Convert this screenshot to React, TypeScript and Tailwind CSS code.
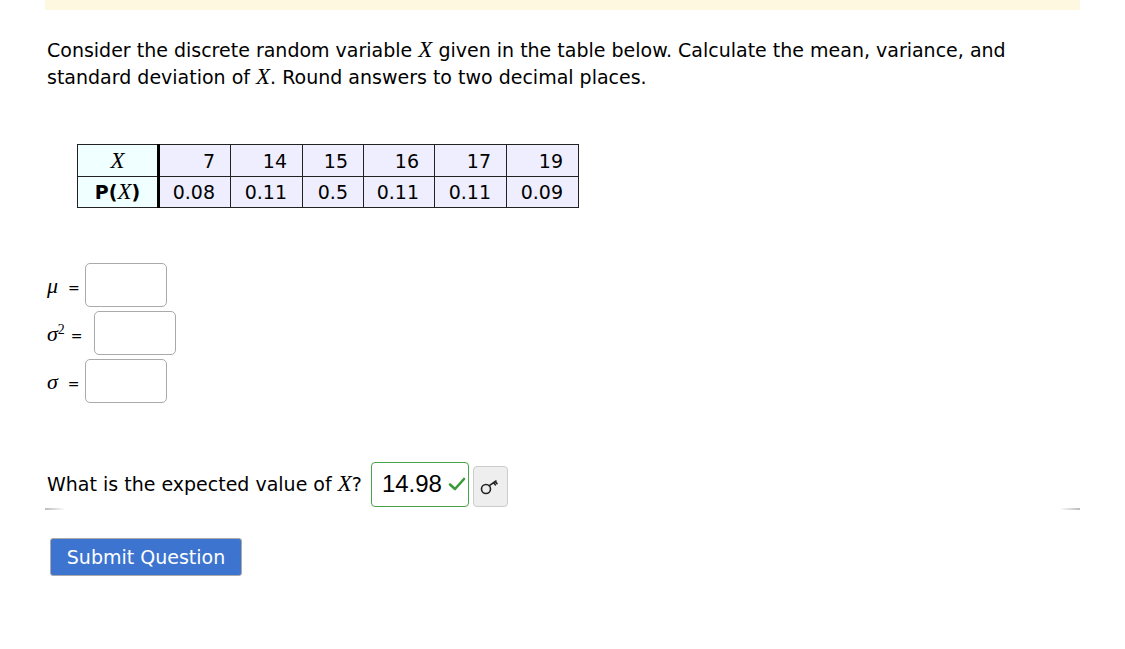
import { ReactNode } from "react";

function MathVar({ children }: { children: ReactNode }) {
  return (
    <span className="italic text-[23px] leading-[20px] [font-family:'Liberation_Serif',serif]">{children}</span>
  );
}

const xs = [7, 14, 15, 16, 17, 19];
const ps = ["0.08", "0.11", "0.5", "0.11", "0.11", "0.09"];
const widths = ["w-[72px]", "w-[72px]", "w-[61px]", "w-[71px]", "w-[72px]", "w-[72px]"];

function AnswerBox({ className = "" }: { className?: string }) {
  return <div className={`h-[44px] w-[82px] rounded-[5px] border border-[#aaa] bg-white ${className}`} />;
}

export default function App() {
  return (
    <div className="min-h-[649px] bg-white text-[19px] text-black [font-family:'DejaVu_Sans',sans-serif]">
      <div className="ml-[45px] w-[1035px]">
        <div className="h-[10px] bg-[#fff8e1]" />

        <p className="mt-[27px] w-[1000px] pl-[2px] leading-[27px]">
          Consider the discrete random variable <MathVar>X</MathVar> given in the table below. Calculate the mean,
          variance, and standard deviation of <MathVar>X</MathVar>. Round answers to two decimal places.
        </p>

        <table className="ml-[32px] mt-[53px] border-collapse border border-[#222] leading-[22px]">
          <tbody>
            <tr className="h-[32px]">
              <td className="w-[81px] border border-[#222] bg-[#f0ffff] text-center">
                <MathVar>X</MathVar>
              </td>
              {xs.map((x, i) => (
                <td
                  key={x}
                  className={`${widths[i]} border border-[#222] bg-[#eeeeff] pr-[15px] text-right ${i === 0 ? "border-l-[3px] border-l-black" : ""}`}
                >
                  {x}
                </td>
              ))}
            </tr>
            <tr className="h-[31px]">
              <td className="border border-[#222] bg-[#f0ffff] text-center font-bold">
                P(<span className="font-normal"><MathVar>X</MathVar></span>)
              </td>
              {ps.map((p, i) => (
                <td
                  key={i}
                  className={`border border-[#222] bg-[#eeeeff] pr-[15px] text-right ${i === 0 ? "border-l-[3px] border-l-black" : ""}`}
                >
                  {p}
                </td>
              ))}
            </tr>
          </tbody>
        </table>

        <div className="mt-[55px] flex flex-col gap-[4px] pl-[2px] text-[14px]">
          <div className="flex items-center">
            <span className="w-[38px]">
              <span className="mr-[10px] italic text-[22px] [font-family:'Liberation_Serif',serif]">μ</span>
              <span>=</span>
            </span>
            <AnswerBox />
          </div>
          <div className="flex items-center">
            <span className="w-[47px]">
              <span className="mr-[6px] italic text-[22px] [font-family:'Liberation_Serif',serif]">
                σ<sup className="not-italic text-[14px]">2</sup>
              </span>
              <span>=</span>
            </span>
            <AnswerBox className="w-[81px]" />
          </div>
          <div className="flex items-center">
            <span className="w-[38px]">
              <span className="mr-[10px] italic text-[22px] [font-family:'Liberation_Serif',serif]">σ</span>
              <span>=</span>
            </span>
            <AnswerBox className="w-[81px]" />
          </div>
        </div>

        <div className="mt-[58px] flex items-center pl-[2px]">
          <span>
            What is the expected value of <MathVar>X</MathVar>?
          </span>
          <div className="ml-[9px] flex h-[45px] w-[98px] items-center gap-[6px] rounded-[4px] border border-[#4aa34a] pl-[10px] text-[24px] [font-family:'Liberation_Sans',sans-serif]">
            <span>14.98</span>
            <svg width="18" height="18" viewBox="0 0 18 18" className="text-[#3a9a3a]">
              <path d="M2 9.5 L7 14 L16 4" fill="none" stroke="currentColor" strokeWidth="2.6" strokeLinecap="round" strokeLinejoin="round" />
            </svg>
          </div>
          <button className="ml-[4px] mt-[5px] flex h-[41px] w-[35px] items-center justify-center rounded-[4px] border border-[#ccc] bg-[#eee]">
            <svg width="22" height="18" viewBox="0 0 22 18">
              <circle cx="7" cy="11" r="4.5" fill="none" stroke="#222" strokeWidth="1.6" />
              <path d="M10.3 7.7 L17 3 M14.5 4.8 L16.3 6.8 M16.2 3.6 L18 5.6" fill="none" stroke="#222" strokeWidth="1.6" strokeLinecap="round" />
            </svg>
          </button>
        </div>

        <div className="mt-[1px] h-[2px] bg-[linear-gradient(to_right,#bbb,#fff_2%,#fff_98%,#bbb)]" />

        <button className="ml-[5px] mt-[28px] h-[38px] w-[192px] rounded-[3px] border border-[#aaa] bg-[#3c74cf] text-center text-white">
          Submit Question
        </button>
      </div>
    </div>
  );
}
